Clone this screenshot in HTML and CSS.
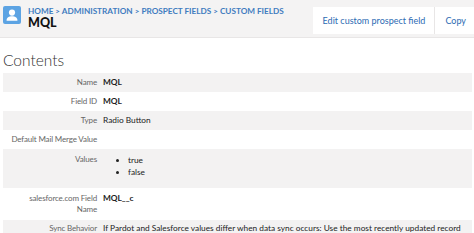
FILE: index.html
```html
<!DOCTYPE html>
<html lang="en">
<head>
    <meta charset="UTF-8">
    <title>MQL - Custom Field</title>
    <link rel="stylesheet" href="styles.css">
</head>
<body>
    <header class="page-header">
        <div class="title-block">
            <div class="record-icon">
                <svg width="18" height="18" viewBox="0 0 18 18">
                    <circle cx="9" cy="6.6" r="3.1" fill="#fff"/>
                    <path d="M3.6 14.2c0-2.6 2.4-4 5.4-4s5.4 1.4 5.4 4v0.6H3.6z" fill="#fff"/>
                </svg>
            </div>
            <div class="titles">
                <div class="breadcrumb">Home &gt; Administration &gt; Prospect Fields &gt; Custom Fields</div>
                <h1>MQL</h1>
            </div>
        </div>
        <div class="header-actions">
            <a href="#edit">Edit custom prospect field</a>
            <a href="#copy">Copy</a>
        </div>
    </header>

    <div class="content">
        <h2>Contents</h2>
        <div class="details">
            <div class="row">
                <div class="label">Name</div>
                <div class="value strong">MQL</div>
            </div>
            <div class="row">
                <div class="label">Field ID</div>
                <div class="value strong">MQL</div>
            </div>
            <div class="row">
                <div class="label">Type</div>
                <div class="value">Radio Button</div>
            </div>
            <div class="row">
                <div class="label">Default Mail Merge Value</div>
                <div class="value"></div>
            </div>
            <div class="row tall">
                <div class="label">Values</div>
                <div class="value">
                    <ul>
                        <li>true</li>
                        <li>false</li>
                    </ul>
                </div>
            </div>
            <div class="row wrapped">
                <div class="label">salesforce.com Field Name</div>
                <div class="value strong">MQL__c</div>
            </div>
            <div class="row">
                <div class="label">Sync Behavior</div>
                <div class="value">If Pardot and Salesforce values differ when data sync occurs: Use the most recently updated record</div>
            </div>
        </div>
    </div>
</body>
</html>
```

FILE: styles.css
```css
body {
    margin: 0;
    font-family: Lato, "Open Sans", Arial, sans-serif;
    color: #16325c;
    background: #fff;
}

.page-header {
    display: flex;
    justify-content: space-between;
    align-items: flex-start;
    height: 37px;
    background: #f4f3f3;
    border-bottom: 1px solid #e8e6e6;
}

.title-block {
    display: flex;
    align-items: flex-start;
    padding: 6px 0 0 3px;
    white-space: nowrap;
}

.record-icon {
    flex-shrink: 0;
    width: 18px;
    height: 18px;
    background: #5ca3e3;
    border-radius: 2px;
    margin-right: 7px;
}

.record-icon svg {
    display: block;
}

.breadcrumb {
    font-size: 8.2px;
    font-weight: 700;
    text-transform: uppercase;
    color: #3f7cc0;
    line-height: 10px;
}

h1 {
    margin: 0;
    font-size: 12.5px;
    font-weight: 900;
    color: #111;
    line-height: 13px;
}

.header-actions {
    display: flex;
    flex-shrink: 0;
    margin-top: 7px;
    background: #fff;
    white-space: nowrap;
}

.header-actions a {
    display: block;
    padding: 0 9px 0 10px;
    height: 27px;
    line-height: 27px;
    font-size: 9px;
    color: #2d6bb3;
    text-decoration: none;
}

.header-actions a + a {
    border-left: 1px solid #e8e6e6;
    padding: 0 8px 0 10px;
}

.content {
    padding: 0 2px 0 3px;
}

h2 {
    margin: 12px 0 0;
    font-size: 15.5px;
    font-weight: 300;
    color: #333;
    line-height: 20px;
}

.details {
    margin-top: 3px;
    line-height: 11px;
}

.row {
    display: grid;
    grid-template-columns: 88px 1fr;
    column-gap: 6px;
    padding: 4px 0 4px 6px;
}

.row:nth-child(odd) {
    background: #f3f2f2;
}

.label {
    text-align: right;
    font-size: 8px;
    letter-spacing: -0.15px;
    color: #666;
}

.value {
    font-size: 8.3px;
    color: #222;
    white-space: nowrap;
}

.value.strong {
    font-weight: 700;
}

.row.tall {
    padding-top: 5px;
    padding-bottom: 10px;
}

.row.wrapped {
    padding-top: 5px;
    padding-bottom: 5px;
}

.row:last-child {
    padding-top: 3px;
    padding-bottom: 3px;
}

.details ul {
    margin: 0;
    padding-left: 25px;
}

.details li {
    line-height: 12px;
}
```
